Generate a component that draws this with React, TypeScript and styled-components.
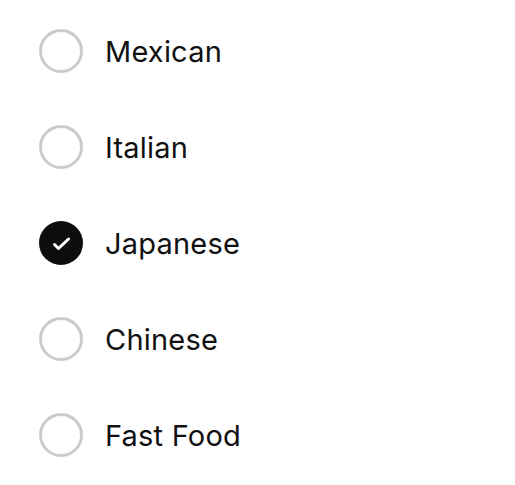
import React, { useState } from 'react';
import styled, { createGlobalStyle } from 'styled-components';

const GlobalStyle = createGlobalStyle`
  body {
    margin: 0;
    background: #ffffff;
    font-family: 'Inter', 'Noto Sans', sans-serif;
  }
`;

type radioProps = {
  checked?: boolean;
};

const List = styled.div`
  display: flex;
  flex-direction: column;
  padding: 3px 0 0 39px;
`;

const Row = styled.label`
  display: flex;
  align-items: center;
  gap: 22px;
  height: 96px;
  cursor: pointer;
`;

const Radio = styled.span<radioProps>`
  box-sizing: border-box;
  width: 44px;
  height: 44px;
  border-radius: 50%;
  flex-shrink: 0;
  display: flex;
  align-items: center;
  justify-content: center;
  border: ${(props) => (props.checked ? 'none' : '3px solid #cbcbcb')};
  background-color: ${(props) => (props.checked ? '#0d0d0d' : '#ffffff')};
`;

const Label = styled.span`
  font-size: 29px;
  font-weight: 400;
  color: #111111;
  letter-spacing: 0.2px;
`;

const options = ['Mexican', 'Italian', 'Japanese', 'Chinese', 'Fast Food'];

export default function App() {
  const [selected, setSelected] = useState('Japanese');

  return (
    <>
      <GlobalStyle />
      <List>
        {options.map((opt) => (
          <Row key={opt} onClick={() => setSelected(opt)}>
            <Radio checked={selected === opt}>
              {selected === opt && (
                <svg width="24" height="24" viewBox="0 0 24 24" fill="none">
                  <path
                    d="M5.5 13.5l4 4L19.5 8"
                    stroke="#ffffff"
                    strokeWidth="3"
                    strokeLinecap="round"
                    strokeLinejoin="round"
                  />
                </svg>
              )}
            </Radio>
            <Label>{opt}</Label>
          </Row>
        ))}
      </List>
    </>
  );
}
